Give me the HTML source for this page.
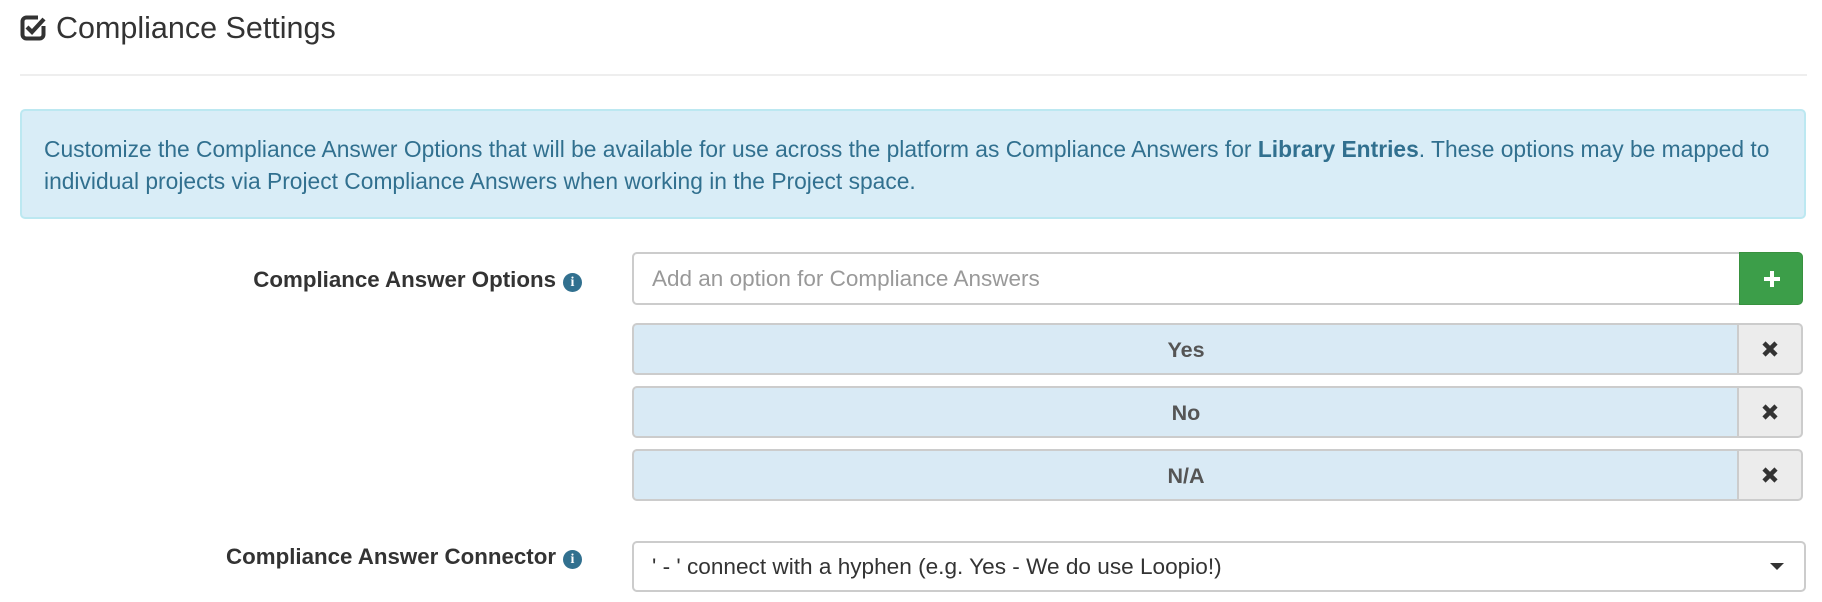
<!DOCTYPE html>
<html><head><style>
*{box-sizing:border-box;margin:0;padding:0}
body{width:1822px;height:602px;background:#fff;font-family:"Liberation Sans",Arial,sans-serif;color:#333;position:relative;overflow:hidden}
.abs{position:absolute}
h1{position:absolute;left:56px;top:9px;font-size:30.5px;font-weight:normal;color:#333;line-height:38px}
.hr{left:20px;top:74px;width:1787px;height:2px;background:#eee}
.alert{left:20px;top:109px;width:1786px;height:110px;background:#d9edf7;border:2px solid #bce8f1;border-radius:5px;color:#31708f;font-size:22.8px;line-height:31.5px;padding:23px 22px}
.lbl{font-weight:bold;font-size:22.3px;color:#333;text-align:right;width:582px;left:0;white-space:nowrap}
.info{display:inline-block;width:19px;height:19px;border-radius:50%;background:#31708f;color:#fff;font-size:14px;font-family:"Liberation Serif",serif;font-weight:bold;text-align:center;line-height:19px;vertical-align:1px;margin-left:7px}
.input{left:632px;top:252px;width:1108px;height:53px;border:2px solid #ccc;border-right:none;border-radius:5px 0 0 5px;font-size:22.5px;color:#999;padding:12px 18px}
.plus{left:1739px;top:252px;width:64px;height:53px;background:#3c9e49;border:1px solid #38913f;border-radius:0 5px 5px 0}
.row{left:632px;width:1106px;height:52px;background:#d9eaf5;border:2px solid #ccc;border-right:none;border-radius:5px 0 0 5px;text-align:center;font-weight:bold;font-size:21.5px;color:#555;line-height:50px}
.del{left:1737px;width:66px;height:52px;background:#ececec;border:2px solid #ccc;border-radius:0 5px 5px 0}
.sel{left:632px;top:541px;width:1174px;height:51px;border:2px solid #ccc;border-radius:5px;font-size:22.6px;color:#333;padding:11px 18px}
</style></head><body>
<svg class="abs" style="left:20px;top:14px" width="28" height="28" viewBox="0 0 28 28"><rect x="2.5" y="3.5" width="21" height="21" rx="4" fill="none" stroke="#333" stroke-width="4"/><rect x="18" y="0" width="10" height="12" fill="#fff"/><path d="M7 13 L12 18 L24 5" fill="none" stroke="#333" stroke-width="4.2"/></svg>
<h1>Compliance Settings</h1>
<div class="abs hr"></div>
<div class="abs alert">Customize the Compliance Answer Options that will be available for use across the platform as Compliance Answers for <b>Library Entries</b>. These options may be mapped to individual projects via Project Compliance Answers when working in the Project space.</div>
<div class="abs lbl" style="top:267px">Compliance Answer Options<span class="info">i</span></div>
<div class="abs input">Add an option for Compliance Answers</div>
<div class="abs plus"><svg class="abs" style="left:23px;top:17px" width="18" height="18"><path d="M9 1V17M1 9H17" stroke="#fff" stroke-width="4"/></svg></div>
<div class="abs row" style="top:323px">Yes</div><div class="abs del" style="top:323px"><svg class="abs" style="left:22px;top:15px" width="18" height="18"><path d="M3 3L15 15M15 3L3 15" stroke="#333" stroke-width="4.5"/></svg></div>
<div class="abs row" style="top:386px">No</div><div class="abs del" style="top:386px"><svg class="abs" style="left:22px;top:15px" width="18" height="18"><path d="M3 3L15 15M15 3L3 15" stroke="#333" stroke-width="4.5"/></svg></div>
<div class="abs row" style="top:449px">N/A</div><div class="abs del" style="top:449px"><svg class="abs" style="left:22px;top:15px" width="18" height="18"><path d="M3 3L15 15M15 3L3 15" stroke="#333" stroke-width="4.5"/></svg></div>
<div class="abs lbl" style="top:544px">Compliance Answer Connector<span class="info">i</span></div>
<div class="abs sel">' - ' connect with a hyphen (e.g. Yes - We do use Loopio!)<svg class="abs" style="right:20px;top:20px" width="14" height="8"><path d="M0 0H14L7 7Z" fill="#333"/></svg></div>
</body></html>
